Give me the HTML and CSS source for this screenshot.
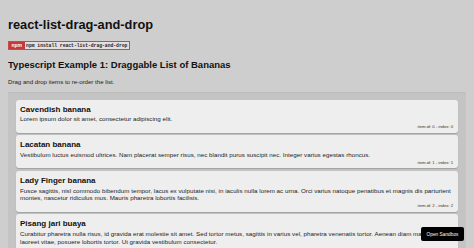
FILE: index.html
```html
<!DOCTYPE html>
<html>
<head>
<meta charset="utf-8">
<link rel="stylesheet" href="styles.css">
</head>
<body>
<h1 class="title">react-list-drag-and-drop</h1>
<div class="badge"><span class="badge-npm">npm</span><span class="badge-cmd">npm install react-list-drag-and-drop</span></div>
<h2 class="subtitle">Typescript Example 1: Draggable List of Bananas</h2>
<p class="intro">Drag and drop items to re-order the list.</p>
<div class="list">
  <div class="item">
    <div class="item-title">Cavendish banana</div>
    <div class="item-desc">Lorem ipsum dolor sit amet, consectetur adipiscing elit.</div>
    <div class="item-id">item.id: 0 - index: 0</div>
  </div>
  <div class="item">
    <div class="item-title">Lacatan banana</div>
    <div class="item-desc">Vestibulum luctus euismod ultrices. Nam placerat semper risus, nec blandit purus suscipit nec. Integer varius egestas rhoncus.</div>
    <div class="item-id">item.id: 1 - index: 1</div>
  </div>
  <div class="item">
    <div class="item-title">Lady Finger banana</div>
    <div class="item-desc">Fusce sagittis, nisl commodo bibendum tempor, lacus ex vulputate nisi, in iaculis nulla lorem ac urna. Orci varius natoque penatibus et magnis dis parturient montes, nascetur ridiculus mus. Mauris pharetra lobortis facilisis.</div>
    <div class="item-id">item.id: 2 - index: 2</div>
  </div>
  <div class="item">
    <div class="item-title">Pisang jari buaya</div>
    <div class="item-desc">Curabitur pharetra nulla risus, id gravida erat molestie sit amet. Sed tortor metus, sagittis in varius vel, pharetra venenatis tortor. Aenean diam mauris, sed laoreet vitae, posuere lobortis tortor. Ut gravida vestibulum consectetur.</div>
    <div class="item-id">item.id: 3 - index: 3</div>
  </div>
</div>
<a class="sandbox-btn">Open Sandbox</a>
</body>
</html>
```
FILE: styles.css
```css
html, body {
  height: 100%;
  overflow: hidden;
}
body {
  margin: 8px;
  background: #cecece;
  color: #111;
  font-family: "Liberation Sans", Arial, sans-serif;
}
.title {
  margin: 8.5px 0 0 0;
  font-size: 12.8px;
  line-height: 15px;
  font-weight: bold;
}
.badge {
  margin-top: 9px;
  display: inline-flex;
  align-items: stretch;
  height: 9px;
  border: 1px solid #c94a4a;
  background: #e4dede;
  box-sizing: border-box;
  width: 122px;
}
.badge-npm {
  background: #c33a3a;
  color: #fff;
  font-weight: bold;
  font-size: 5px;
  line-height: 7px;
  padding: 0 2.5px;
  margin: 0 1.5px 0 0;
}
.badge-cmd {
  font-family: "Liberation Mono", "Courier New", monospace;
  font-size: 4.7px;
  line-height: 7px;
  color: #222;
  font-weight: bold;
}
.subtitle {
  margin: 8.5px 0 0 0;
  font-size: 9.5px;
  line-height: 12px;
  font-weight: bold;
}
.intro {
  margin: 7.5px 0 0 0;
  font-size: 6.1px;
  line-height: 6.5px;
  color: #222;
}
.list {
  margin-top: 7px;
  background: #c4c4c4;
  border-radius: 2px;
  padding: 7.5px 8px;
  display: flex;
  flex-direction: column;
  gap: 2.7px;
  box-shadow: inset 0 1px 0 #bdbdbd;
}
.item {
  background: #eeeeee;
  border-radius: 3px;
  padding: 5px 5px 3.5px 4px;
  box-shadow: 0 1px 1px rgba(0, 0, 0, 0.18);
}
.item-title {
  font-size: 8px;
  line-height: 9px;
  font-weight: bold;
}
.item-desc {
  margin-top: 1.5px;
  font-size: 6.2px;
  letter-spacing: 0.03px;
  line-height: 7.6px;
  color: #222;
}
.item-id {
  margin-top: 1.5px;
  font-size: 4.2px;
  line-height: 5px;
  text-align: right;
  color: #333;
}
.sandbox-btn {
  position: fixed;
  right: 10px;
  bottom: 7px;
  width: 43px;
  height: 14px;
  background: #000;
  color: #fff;
  border-radius: 2px;
  font-size: 4.8px;
  display: flex;
  align-items: center;
  justify-content: center;
}
```
